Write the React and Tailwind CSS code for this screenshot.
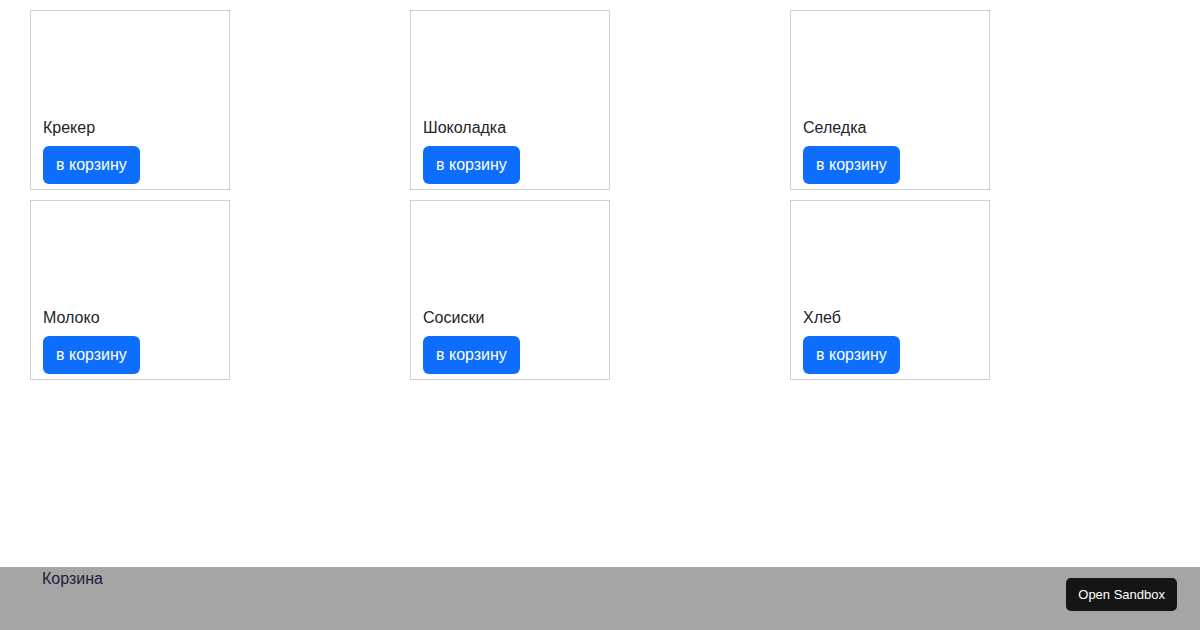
const products = ["Крекер", "Шоколадка", "Селедка", "Молоко", "Сосиски", "Хлеб"];

function ProductCard({ name }) {
  return (
    <div className="w-[200px] h-[180px] border border-[#d0d0d0] flex flex-col justify-end px-3 pb-[5px]">
      <p className="text-[16px] leading-6 text-[#212529] mb-[6px]">{name}</p>
      <button className="self-start h-[38px] px-[13px] rounded-[6px] bg-[#0d6efd] text-white text-[16px]">
        в корзину
      </button>
    </div>
  );
}

export default function App() {
  return (
    <div className="h-[630px] flex flex-col bg-white" style={{ fontFamily: "'Liberation Sans', Arial, sans-serif" }}>
      <main className="flex-1 pl-[30px] pt-[10px]">
        <div className="grid grid-cols-[380px_380px_380px] gap-y-[10px]">
          {products.map((p) => (
            <ProductCard key={p} name={p} />
          ))}
        </div>
      </main>
      <footer className="h-[63px] bg-[#a6a5a5] flex justify-between pl-[42px] pr-[23px]">
        <span className="text-[16px] leading-6 text-[#1c1c3a]">Корзина</span>
        <button className="mt-[11px] h-[33px] px-3 rounded-[5px] bg-[#151515] text-white text-[13px]">
          Open Sandbox
        </button>
      </footer>
    </div>
  );
}
